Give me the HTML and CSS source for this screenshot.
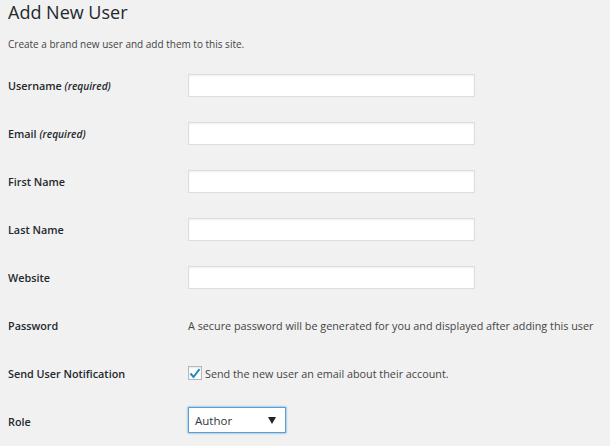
FILE: index.html
```html
<!DOCTYPE html>
<html>
<head>
<meta charset="utf-8">
<link rel="stylesheet" href="styles.css">
</head>
<body>
<div class="wrap">
  <h1 class="title">Add New User</h1>
  <p class="desc">Create a brand new user and add them to this site.</p>
  <div class="form">
    <div class="row">
      <div class="label">Username <span class="req">(required)</span></div>
      <div class="field"><input class="text" type="text"></div>
    </div>
    <div class="row">
      <div class="label">Email <span class="req">(required)</span></div>
      <div class="field"><input class="text" type="text"></div>
    </div>
    <div class="row">
      <div class="label">First Name</div>
      <div class="field"><input class="text" type="text"></div>
    </div>
    <div class="row">
      <div class="label">Last Name</div>
      <div class="field"><input class="text" type="text"></div>
    </div>
    <div class="row">
      <div class="label">Website</div>
      <div class="field"><input class="text" type="text"></div>
    </div>
    <div class="row">
      <div class="label">Password</div>
      <div class="field plain">A secure password will be generated for you and displayed after adding this user</div>
    </div>
    <div class="row">
      <div class="label">Send User Notification</div>
      <div class="field plain">
        <span class="check"><svg width="12" height="11" viewBox="0 0 12 11"><path d="M1.5 5.5 L4.5 9 L10.5 1.2" fill="none" stroke="#1e8cbe" stroke-width="2"/></svg></span>
        <span>Send the new user an email about their account.</span>
      </div>
    </div>
    <div class="row">
      <div class="label">Role</div>
      <div class="field">
        <div class="select"><span>Author</span><span class="arrow"></span></div>
      </div>
    </div>
  </div>
</div>
</body>
</html>
```

FILE: styles.css
```css
html, body {
  margin: 0;
  padding: 0;
  background: #f1f1f1;
}
body {
  font-family: "Open Sans", "Noto Sans", sans-serif;
  color: #23282d;
}
.wrap {
  padding: 0 8px;
}
.title {
  margin: 0;
  padding-top: 0;
  height: 30px;
  font-size: 18px;
  font-weight: 400;
  line-height: 25px;
  color: #23282d;
}
.desc {
  margin: 0;
  height: 31px;
  font-size: 10px;
  line-height: 28px;
  color: #444;
}
.form {
  display: flex;
  flex-direction: column;
}
.row {
  display: flex;
  align-items: center;
  height: 48px;
}
.label {
  width: 180px;
  flex: none;
  font-size: 10.8px;
  font-weight: 600;
  color: #23282d;
}
.req {
  font-style: italic;
  font-weight: 600;
  font-size: 10.2px;
}
.field {
  display: flex;
  align-items: center;
}
.plain {
  font-size: 10.8px;
  color: #444;
  gap: 3px;
}
.text {
  box-sizing: border-box;
  width: 287px;
  height: 23px;
  margin: 0;
  border: 1px solid #ddd;
  box-shadow: inset 0 1px 2px rgba(0,0,0,0.07);
  background: #fff;
  padding: 0;
}
.check {
  box-sizing: border-box;
  width: 14px;
  height: 14px;
  border: 1px solid #b4b9be;
  background: #fff;
  display: flex;
  align-items: center;
  justify-content: center;
  box-shadow: inset 0 1px 2px rgba(0,0,0,0.1);
}
.select {
  box-sizing: border-box;
  width: 98px;
  height: 26px;
  margin-top: -2px;
  border: 1px solid #5b9dd9;
  box-shadow: 0 0 2px rgba(30,140,190,0.8);
  background: #fff;
  display: flex;
  align-items: center;
  justify-content: space-between;
  padding: 0 9px 0 6px;
  font-size: 11.5px;
  color: #32373c;
}
.arrow {
  width: 0;
  height: 0;
  border-left: 4px solid transparent;
  border-right: 4px solid transparent;
  border-top: 7px solid #222;
}
```
